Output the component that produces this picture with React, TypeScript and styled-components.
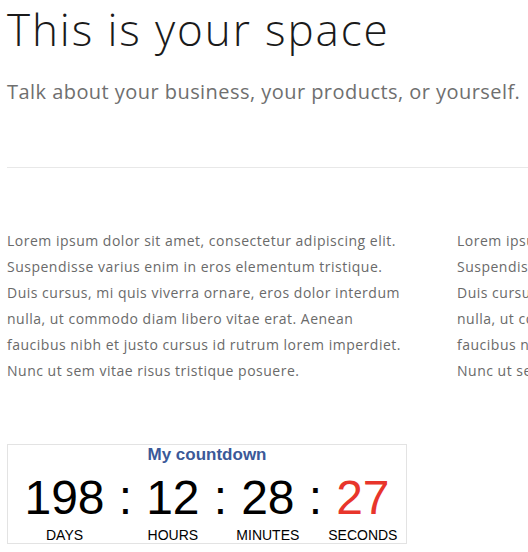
import React, { FC } from 'react';
import styled, { createGlobalStyle } from 'styled-components';

const GlobalStyle = createGlobalStyle`
  html, body {
    margin: 0;
    padding: 0;
    background: #fff;
    overflow: hidden;
  }
  body {
    font-family: 'Open Sans', 'Liberation Sans', sans-serif;
  }
`;

const paragraph =
  'Lorem ipsum dolor sit amet, consectetur adipiscing elit. Suspendisse varius enim in eros elementum tristique. Duis cursus, mi quis viverra ornare, eros dolor interdum nulla, ut commodo diam libero vitae erat. Aenean faucibus nibh et justo cursus id rutrum lorem imperdiet. Nunc ut sem vitae risus tristique posuere.';

const units = [
  { value: '198', label: 'DAYS' },
  { value: '12', label: 'HOURS' },
  { value: '28', label: 'MINUTES' },
  { value: '27', label: 'SECONDS', alert: true },
];

const Countdown: FC = () => (
  <CountdownBox>
    <CountdownTitle>My countdown</CountdownTitle>
    <UnitsRow>
      {units.map((unit, i) => (
        <React.Fragment key={unit.label}>
          {i > 0 && <Separator>:</Separator>}
          <Unit>
            <UnitValue $alert={unit.alert}>{unit.value}</UnitValue>
            <UnitLabel>{unit.label}</UnitLabel>
          </Unit>
        </React.Fragment>
      ))}
    </UnitsRow>
  </CountdownBox>
);

const App: FC = () => {
  return (
    <>
      <GlobalStyle />
      <Page>
        <Header>
          <Title>This is your space</Title>
          <Subtitle>Talk about your business, your products, or yourself.</Subtitle>
        </Header>
        <Divider />
        <Columns>
          <Text>{paragraph}</Text>
          <Text>{paragraph}</Text>
        </Columns>
        <Countdown />
      </Page>
    </>
  );
};

export default App;

const Page = styled.div`
  width: 1000px;
  padding: 0 0 0 7px;
`;
const Header = styled.header`
  display: flex;
  flex-direction: column;
  padding-top: 2px;
`;
const Title = styled.h1`
  margin: 0;
  font-size: 44px;
  font-weight: 300;
  line-height: 54px;
  letter-spacing: 1.9px;
  color: #1a1a1a;
`;
const Subtitle = styled.p`
  margin: 22px 0 0;
  font-size: 20px;
  font-weight: 400;
  line-height: 28px;
  letter-spacing: 0.45px;
  color: #6f6f6f;
`;
const Divider = styled.hr`
  margin: 61px 0 0;
  border: none;
  border-top: 1px solid #e8e8e8;
`;
const Columns = styled.div`
  display: grid;
  grid-template-columns: 400px 400px;
  column-gap: 50px;
  margin-top: 60px;
`;
const Text = styled.p`
  margin: 0;
  font-size: 14px;
  line-height: 26px;
  letter-spacing: 0.5px;
  color: #6a6a6a;
`;
const CountdownBox = styled.div`
  width: 398px;
  height: 98px;
  margin-top: 60px;
  border: 1px solid #e3e3e3;
  font-family: 'Liberation Sans', Arial, sans-serif;
  display: flex;
  flex-direction: column;
  align-items: center;
`;
const CountdownTitle = styled.div`
  font-size: 17px;
  font-weight: 700;
  color: #3b5998;
`;
const UnitsRow = styled.div`
  display: flex;
  align-items: flex-start;
  margin-top: 5px;
`;
const Unit = styled.div`
  display: flex;
  flex-direction: column;
  align-items: center;
`;
const UnitValue = styled.div<{ $alert?: boolean }>`
  padding: 0 10px;
  font-size: 48px;
  color: ${(p) => (p.$alert ? '#e8352b' : '#000')};
`;
const UnitLabel = styled.div`
  margin-top: 2px;
  font-size: 14px;
  color: #000;
`;
const Separator = styled.div`
  width: 21.6px;
  text-align: center;
  font-size: 48px;
  color: #000;
`;
